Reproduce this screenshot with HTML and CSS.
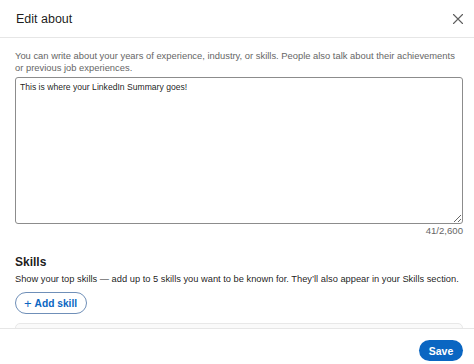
FILE: index.html
```html
<!DOCTYPE html>
<html>
<head>
<meta charset="utf-8">
<link rel="stylesheet" href="styles.css">
</head>
<body>
<div class="dialog">
  <header class="dlg-header">
    <h2 class="dlg-title">Edit about</h2>
    <button class="close-btn" aria-label="Dismiss">
      <svg viewBox="0 0 12 12" width="12" height="12"><path d="M1.5 1.5 L10.5 10.5 M10.5 1.5 L1.5 10.5" stroke="#5e5e5e" stroke-width="1.1" fill="none" stroke-linecap="round"/></svg>
    </button>
  </header>
  <main class="dlg-content">
    <p class="hint">You can write about your years of experience, industry, or skills. People also talk about their achievements or previous job experiences.</p>
    <textarea class="about-input">This is where your LinkedIn Summary goes!</textarea>
    <div class="counter">41/2,600</div>
    <h3 class="section-title">Skills</h3>
    <p class="section-desc">Show your top skills — add up to 5 skills you want to be known for. They’ll also appear in your Skills section.</p>
    <button class="add-skill"><span class="plus">+</span> Add skill</button>
    <div class="skill-box"></div>
  </main>
  <footer class="dlg-footer">
    <button class="save-btn">Save</button>
  </footer>
</div>
</body>
</html>
```
FILE: styles.css
```css
html, body {
  margin: 0;
  padding: 0;
  background: #fff;
}
body {
  font-family: "Liberation Sans", Arial, sans-serif;
  color: rgba(0,0,0,0.9);
}
.dialog {
  width: 474px;
  height: 364px;
  display: flex;
  flex-direction: column;
  overflow: hidden;
}
.dlg-header {
  height: 37px;
  flex: none;
  display: flex;
  align-items: center;
  justify-content: space-between;
  padding: 0 10px 0 16px;
  border-bottom: 1px solid #e6e6e6;
}
.dlg-title {
  margin: 0;
  font-size: 12.5px;
  font-weight: 400;
  color: rgba(0,0,0,0.9);
}
.close-btn {
  border: 0;
  background: none;
  padding: 0;
  width: 12px;
  height: 12px;
  display: flex;
}
.dlg-content {
  flex: 1;
  overflow: hidden;
  padding: 12px 11px 0 15px;
}
.hint {
  margin: 0;
  font-size: 9.4px;
  line-height: 12px;
  color: #666;
}
.about-input {
  display: block;
  box-sizing: border-box;
  width: 100%;
  height: 147px;
  margin-top: 3px;
  padding: 3px 4px;
  border: 1px solid #8c8c8c;
  border-radius: 3px;
  font-family: "Liberation Sans", Arial, sans-serif;
  font-size: 8.6px;
  line-height: 12px;
  color: rgba(0,0,0,0.9);
  resize: vertical;
}
.counter {
  text-align: right;
  font-size: 9.6px;
  line-height: 12px;
  color: #666;
  margin-top: 1px;
}
.section-title {
  margin: 17px 0 0;
  font-size: 12px;
  line-height: 16px;
  font-weight: 700;
}
.section-desc {
  margin: 3px 0 0;
  font-size: 9.3px;
  line-height: 12px;
  color: rgba(0,0,0,0.9);
}
.add-skill {
  margin-top: 7px;
  height: 22px;
  padding: 0 9px 0 8px;
  border: 1px solid #6f8fb8;
  border-radius: 11px;
  background: #fff;
  color: #0a66c2;
  font-family: "Liberation Sans", Arial, sans-serif;
  font-size: 10.2px;
  font-weight: 700;
  display: flex;
  align-items: center;
  gap: 3px;
}
.plus {
  font-size: 13px;
  font-weight: 400;
  line-height: 1;
}
.skill-box {
  margin-top: 9px;
  height: 40px;
  border: 1px solid #e8e8e8;
  border-radius: 5px;
  background: #fafafa;
}
.dlg-footer {
  flex: none;
  height: 36px;
  box-sizing: border-box;
  border-top: 1px solid #e6e6e6;
  padding: 11px 11px 0 0;
  display: flex;
  justify-content: flex-end;
  align-items: flex-start;
}
.save-btn {
  width: 44px;
  height: 21px;
  border: 0;
  border-radius: 11px;
  background: #0a66c2;
  color: #fff;
  font-family: "Liberation Sans", Arial, sans-serif;
  font-size: 10.5px;
  font-weight: 700;
  padding: 0;
}
```
